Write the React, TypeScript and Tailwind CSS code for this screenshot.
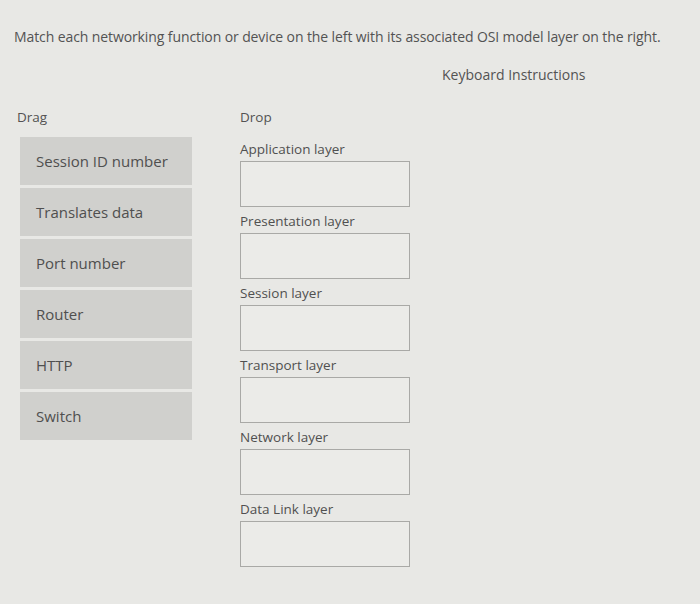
import React from 'react';

const dragItems = ['Session ID number', 'Translates data', 'Port number', 'Router', 'HTTP', 'Switch'];

const dropTargets = [
  'Application layer',
  'Presentation layer',
  'Session layer',
  'Transport layer',
  'Network layer',
  'Data Link layer',
];

const DragItem = ({ label }: { label: string }) => (
  <div className="h-[48px] w-[172px] bg-[#d0d0cd] flex items-center pl-[16px] text-[15px] text-[#4f4f4f]">
    {label}
  </div>
);

const DropTarget = ({ label }: { label: string }) => (
  <div className="flex flex-col">
    <span className="text-[13.5px] leading-[16px] text-[#505050]">{label}</span>
    <div className="mt-[4px] h-[46px] w-[170px] border border-[#a9a9a6] bg-[#ebebe8]" />
  </div>
);

export default function App() {
  return (
    <div
      className="w-[700px] h-[604px] bg-[#e8e8e5] text-[#535353] overflow-hidden"
      style={{ fontFamily: '"Open Sans", "Noto Sans", sans-serif' }}
    >
      <p className="pt-[28px] pl-[14px] text-[14px] leading-[18px] tracking-[-0.1px]">
        Match each networking function or device on the left with its associated OSI model layer on the right.
      </p>
      <div className="pl-[442px] mt-[20px] text-[14px] leading-[18px]">Keyboard Instructions</div>

      <div className="flex mt-[25px] pl-[17px]">
        <div className="w-[223px] flex flex-col">
          <span className="text-[13.5px] leading-[16px]">Drag</span>
          <div className="mt-[12px] ml-[3px] flex flex-col gap-[3px]">
            {dragItems.map((item) => (
              <DragItem key={item} label={item} />
            ))}
          </div>
        </div>
        <div className="flex flex-col">
          <span className="text-[13.5px] leading-[16px]">Drop</span>
          <div className="mt-[16px] flex flex-col gap-[6px]">
            {dropTargets.map((target) => (
              <DropTarget key={target} label={target} />
            ))}
          </div>
        </div>
      </div>
    </div>
  );
}
